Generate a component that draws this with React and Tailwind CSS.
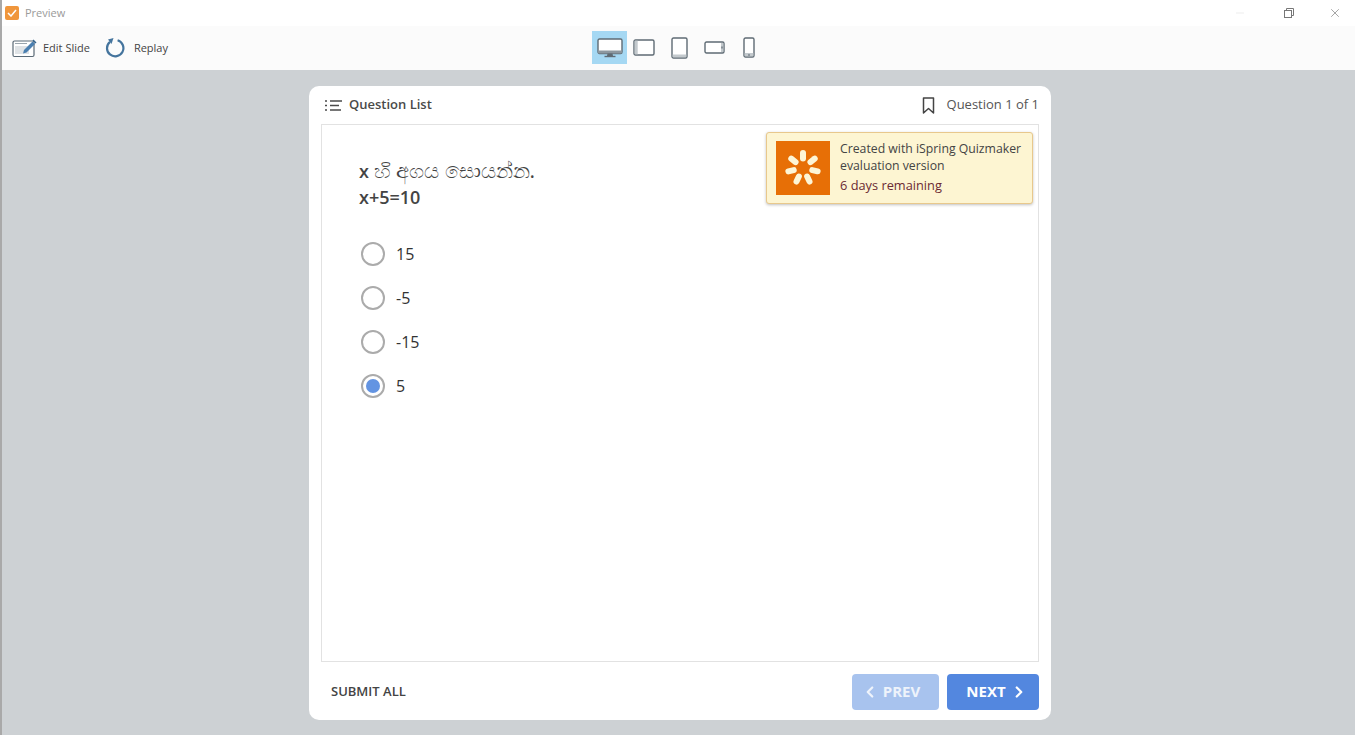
import { ChevronLeft, ChevronRight, Minus, X } from "lucide-react";

function DesktopIcon() {
  return (
    <svg width="26" height="20" viewBox="0 0 26 20" fill="none">
      <rect x="1" y="1" width="24" height="14.5" rx="1.5" fill="#fff" stroke="#5f6b74" strokeWidth="1.4" />
      <path d="M1 12.5h24v1.5a1.5 1.5 0 0 1-1.5 1.5h-21A1.5 1.5 0 0 1 1 14z" fill="#8c979f" />
      <path d="M10.5 15.5h5l.5 2.5h-6z" fill="#5f6b74" />
      <path d="M7.5 18.5h11" stroke="#5f6b74" strokeWidth="1.4" />
    </svg>
  );
}

function TabletWideIcon() {
  return (
    <svg width="22" height="17" viewBox="0 0 22 17" fill="none">
      <rect x="1" y="1" width="20" height="15" rx="1.5" fill="#fff" stroke="#5f6b74" strokeWidth="1.4" />
      <path d="M1.7 1.7h3v13.6h-3z" fill="#c3c9cd" />
    </svg>
  );
}

function TabletIcon() {
  return (
    <svg width="17" height="22" viewBox="0 0 17 22" fill="none">
      <rect x="1" y="1" width="15" height="20" rx="1.5" fill="#fff" stroke="#5f6b74" strokeWidth="1.4" />
      <path d="M1.7 17.5h13.6v2.800H1.7z" fill="#c3c9cd" />
    </svg>
  );
}

function PhoneWideIcon() {
  return (
    <svg width="21" height="13" viewBox="0 0 21 13" fill="none">
      <rect x="1" y="1" width="19" height="11" rx="1.5" fill="#fff" stroke="#5f6b74" strokeWidth="1.4" />
      <path d="M17 2h2.3v9H17z" fill="#c3c9cd" />
      <path d="M18 5.5v2" stroke="#5f6b74" strokeWidth="1.2" />
    </svg>
  );
}

function PhoneIcon() {
  return (
    <svg width="12" height="21" viewBox="0 0 12 21" fill="none">
      <rect x="1" y="1" width="10" height="19" rx="1.5" fill="#fff" stroke="#5f6b74" strokeWidth="1.4" />
      <path d="M1.7 16h8.6v3.3H1.7z" fill="#c3c9cd" />
      <path d="M5 18h2" stroke="#5f6b74" strokeWidth="1.2" />
    </svg>
  );
}

function EditSlideIcon() {
  return (
    <svg width="25" height="19" viewBox="0 0 25 19" fill="none">
      <rect x="1" y="2" width="21" height="15.5" rx="1.5" fill="#fff" stroke="#5b6a76" strokeWidth="1.2" />
      <path d="M3 7h14v8H3z" fill="#dfe3e6" />
      <path d="M3 4.5h12" stroke="#9aa5ad" strokeWidth="1" />
      <path d="M11 14.5l1-3.500 8.500-8.500 2.500 2.500-8.500 8.500z" fill="#4a7fb0" />
      <path d="M20.500 1.500l1-1 3 3-1 1z" fill="#33648f" />
    </svg>
  );
}

function ReplayIcon() {
  return (
    <svg width="20" height="20" viewBox="0 0 20 20" fill="none">
      <path d="M5 3.800A8.200 8.200 0 1 0 12.600 2.300" stroke="#44749d" strokeWidth="2.200" />
      <path d="M8.500 0L3 1.500l3.500 4.500z" fill="#44749d" />
    </svg>
  );
}

function ListIcon() {
  return (
    <svg width="17" height="11" viewBox="0 0 17 11" fill="none" stroke="#4a4a4a" strokeWidth="1.500">
      <path d="M0 1h2M5 1h12M0 5.500h2M5 5.500h9M0 10h2M5 10h11" />
    </svg>
  );
}

function BookmarkIcon() {
  return (
    <svg width="13" height="17" viewBox="0 0 13 17" fill="none">
      <path d="M1.500 1h10v15L6.500 11.500 1.500 16z" stroke="#444" strokeWidth="1.500" strokeLinejoin="round" />
    </svg>
  );
}

function SpringLogo() {
  // seven spokes, evenly spread
  const angles = [0, 51.4, 102.8, 154.2, 205.7, 257.1, 308.6];
  return (
    <svg width="54" height="54" viewBox="0 0 54 54">
      <rect width="54" height="54" fill="#e76f06" />
      {angles.map((a) => (
        <rect key={a} x="24" y="9" width="6" height="11.500" rx="3" fill="#fdf5d6" transform={`rotate(${a} 27 27)`} />
      ))}
    </svg>
  );
}

function Option({ label, checked }) {
  return (
    <div className="flex h-[44px] items-center">
      <span className="flex h-[24px] w-[24px] items-center justify-center rounded-full border-2 border-[#ababab] bg-white">
        {checked && <span className="h-[14px] w-[14px] rounded-full bg-[#6394e2]" />}
      </span>
      <span className="ml-[11px] text-[16px] text-[#333]">{label}</span>
    </div>
  );
}

export default function App() {
  return (
    <div className="flex h-[735px] w-[1355px] flex-col overflow-hidden border-l-2 border-[#a9a9a9] bg-[#cdd1d4] font-['Open_Sans','Noto_Sans',sans-serif]">
      <div className="flex h-[26px] shrink-0 items-center justify-between bg-white">
        <div className="flex items-center">
          <span className="ml-[3px] flex h-[14px] w-[14px] items-center justify-center rounded-[2px] bg-[#f0963c]">
            <svg width="10" height="8" viewBox="0 0 10 8" fill="none">
              <path d="M1 4l3 3 5-6" stroke="#fff" strokeWidth="1.500" />
            </svg>
          </span>
          <span className="ml-[6px] text-[11px] text-[#9a9a9a]">Preview</span>
        </div>
        <div className="flex items-center">
          <Minus size={12} strokeWidth={1} className="text-[#d8d8d8]" />
          <svg width="10" height="10" viewBox="0 0 10 10" fill="none" stroke="#777" className="ml-[38px]">
            <rect x="0.500" y="2.500" width="7" height="7" />
            <path d="M2.500 2.500v-2h7v7h-2" />
          </svg>
          <X size={14} strokeWidth={1} className="ml-[34px] mr-[13px] text-[#666]" />
        </div>
      </div>

      <div className="relative flex h-[44px] shrink-0 items-center bg-[#fbfbfb]">
        <span className="absolute left-[-2px] top-0 h-[22px] w-[2px] bg-[#dc7a26]" />
        <div className="ml-[10px] flex items-center">
          <EditSlideIcon />
          <span className="ml-[6px] text-[11px] text-[#444]">Edit Slide</span>
        </div>
        <div className="ml-[15px] flex items-center">
          <ReplayIcon />
          <span className="ml-[9px] text-[11px] text-[#444]">Replay</span>
        </div>
        <div className="absolute left-[590px] top-[5px] flex h-[33px] items-center">
          <span className="flex h-[33px] w-[35px] items-center justify-center bg-[#a5d8f3]">
            <DesktopIcon />
          </span>
          <span className="ml-[6px] flex w-[22px] justify-center"><TabletWideIcon /></span>
          <span className="ml-[16px] flex w-[17px] justify-center"><TabletIcon /></span>
          <span className="ml-[16px] flex w-[21px] justify-center"><PhoneWideIcon /></span>
          <span className="ml-[18px] flex w-[12px] justify-center"><PhoneIcon /></span>
        </div>
      </div>

      <div className="flex flex-1 justify-center pl-[3px] pt-[16px]">
        <div className="flex h-[634px] w-[742px] flex-col rounded-[10px] bg-white px-[12px]">
          <div className="flex h-[38px] shrink-0 items-center justify-between">
            <div className="ml-[4px] flex items-center">
              <ListIcon />
              <span className="ml-[7px] text-[13px] font-semibold text-[#4a4a4a]">Question List</span>
            </div>
            <div className="flex items-center">
              <BookmarkIcon />
              <span className="ml-[12px] text-[13px] text-[#555]">Question 1 of 1</span>
            </div>
          </div>

          <div className="relative h-[538px] shrink-0 border border-[#e2e2e2] pl-[37px] pt-[32px]">
            <p className="text-[18px] font-semibold leading-[27px] text-[#444]">
              x <span className="text-[21px] font-normal">හි අගය සොයන්න.</span>
            </p>
            <p className="-mt-px text-[18px] font-semibold leading-[27px] text-[#444]">x+5=10</p>
            <div className="ml-[2px] mt-[21px]">
              <Option label="15" />
              <Option label="-5" />
              <Option label="-15" />
              <Option label="5" checked />
            </div>

            <div className="absolute right-[5px] top-[7px] flex h-[72px] w-[267px] items-center rounded-[3px] border border-[#e8c88c] bg-[#fdf5d2] pl-[9px] shadow-[0_1px_3px_rgba(0,0,0,0.25)]">
              <SpringLogo />
              <div className="ml-[10px] -mt-[2px] text-[12.250px] leading-[17.500px]">
                <p className="text-[#444]">Created with iSpring Quizmaker</p>
                <p className="text-[#444]">evaluation version</p>
                <p className="mt-[2px] text-[12.800px] text-[#6b2a33]">6 days remaining</p>
              </div>
            </div>
          </div>

          <div className="flex flex-1 items-center justify-between pt-[1px]">
            <span className="ml-[10px] text-[13px] font-semibold text-[#444]">SUBMIT ALL</span>
            <div className="flex items-center gap-[8px]">
              <button className="flex h-[36px] w-[87px] items-center justify-center rounded-[4px] bg-[#a8c3ee] pr-[10px] text-[15px] font-bold text-[#eef3fb]">
                <ChevronLeft size={18} strokeWidth={3} className="mr-[4px]" />
                PREV
              </button>
              <button className="flex h-[36px] w-[92px] items-center justify-center rounded-[4px] bg-[#5387df] pl-[8px] text-[15px] font-bold text-white">
                NEXT
                <ChevronRight size={18} strokeWidth={3} className="ml-[4px]" />
              </button>
            </div>
          </div>
        </div>
      </div>
    </div>
  );
}
